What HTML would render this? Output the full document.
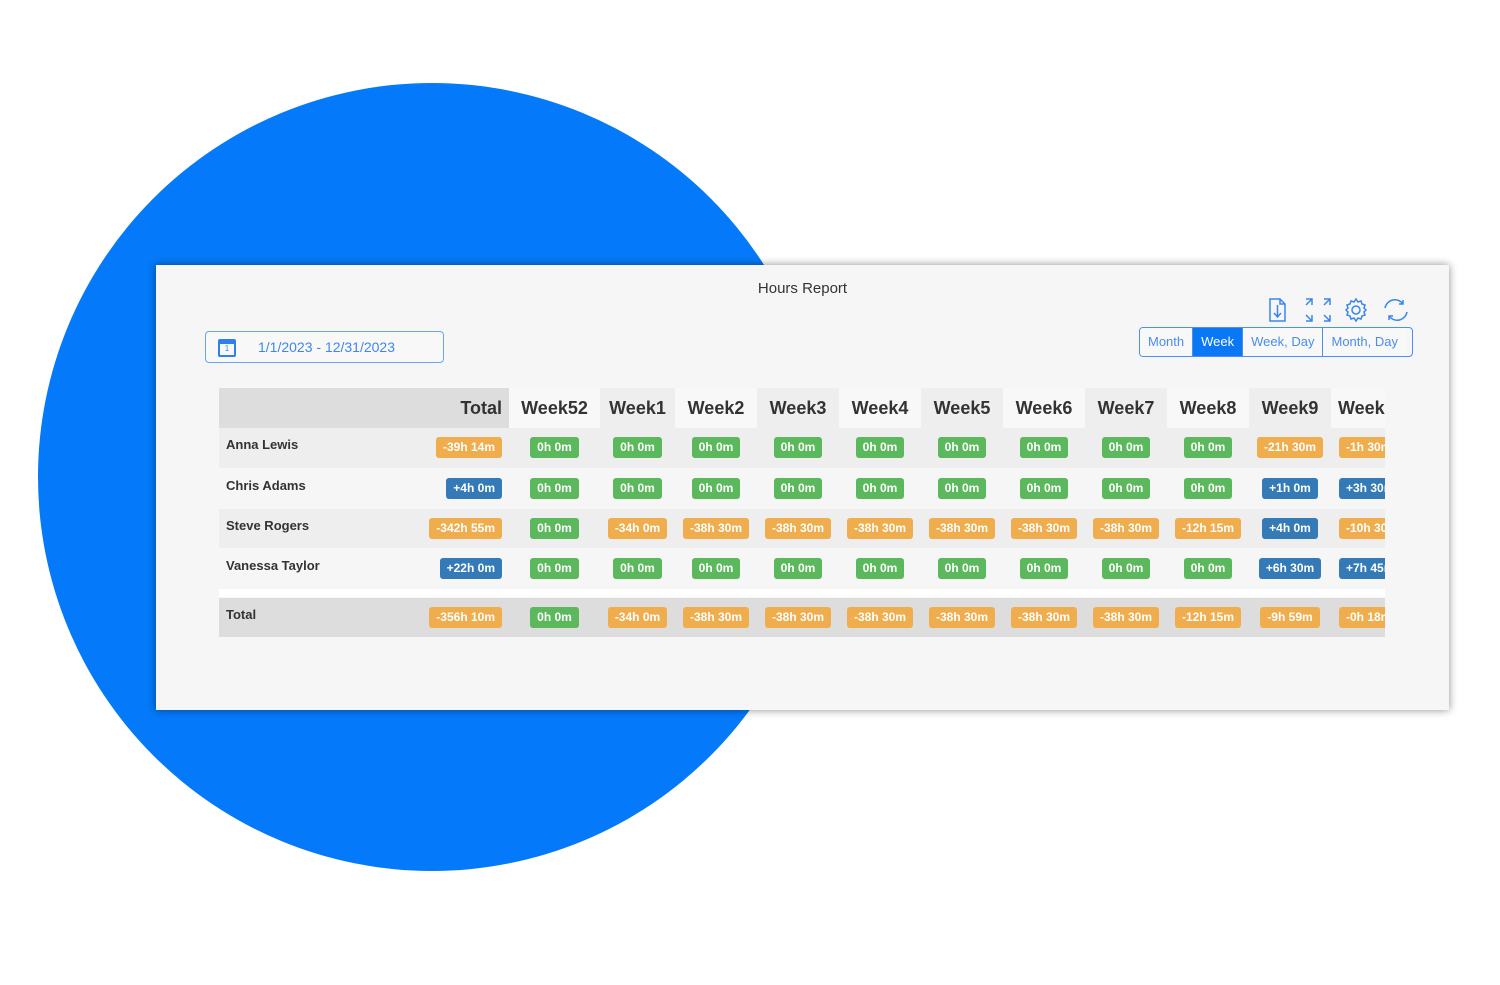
<!DOCTYPE html>
<html><head><meta charset="utf-8"><style>
*{margin:0;padding:0;box-sizing:border-box}
body{width:1500px;height:985px;background:#fff;position:relative;overflow:hidden;font-family:"Liberation Sans",sans-serif}
.circle{position:absolute;left:38px;top:83px;width:788px;height:788px;border-radius:50%;background:#0479f9}
.panel{position:absolute;left:156px;top:265px;width:1293px;height:445px;background:#f6f6f6;box-shadow:0 0 8px rgba(0,0,0,.45)}
.title{position:absolute;left:0;width:100%;top:15px;text-align:center;font-size:15px;color:#333}
.date{position:absolute;left:49px;top:66px;width:239px;height:32px;border:1px solid #6aa5f5;border-radius:4px;background:#f8f8f8;color:#3f86f0;font-size:14px;line-height:30px;padding-left:52px}
.cal{position:absolute;left:12px;top:7px;width:18px;height:18px;border:2px solid #2f80ed;border-top-width:5px;border-radius:2px;font-size:8px;line-height:10px;text-align:center}
.seg{position:absolute;left:983px;top:62px;width:274px;height:30px;display:flex;border:1px solid #4a90f0;border-radius:4px;overflow:hidden}
.seg div{padding:0 8px;font-size:13px;line-height:28px;color:#4a8cf0;border-left:1px solid #4a90f0;background:#f8f8f8;white-space:nowrap}
.seg div:first-child{border-left:none}
.seg .on{background:#0a78f5;color:#fff}
.icons{position:absolute;left:1110px;top:30px}
table{position:absolute;left:63px;top:123px;border-collapse:collapse}
td,th{height:40px;padding:0;text-align:center}
th{font-size:18px;color:#333;font-weight:bold}
td{border-bottom:1px solid #f6f6f6}
td.n{background:#ddd;width:290px;text-align:left;vertical-align:top;padding:9px 7px;font-size:13px;font-weight:bold;color:#333;position:relative}
.b{display:inline-block;vertical-align:middle;height:21px;line-height:21px;padding:0 7px;border-radius:3px;color:#fff;font-size:12px;font-weight:bold;white-space:nowrap}
.g{background:#5cb85c}.o{background:#f0ad4e}.bl{background:#337ab7}
.n .b{position:absolute;right:7px;top:9px}
.c{display:inline-block;vertical-align:middle;width:46px;overflow:hidden;border-radius:3px 0 0 3px}
.c .b{border-radius:3px 0 0 3px}
tr.r1 td{background:#eee}tr.r2 td{background:#f6f6f6}
tr.t td{background:#ddd}
</style></head><body>
<div class="circle"></div>
<div class="panel">
<div class="title">Hours Report</div>
<div class="date"><div class="cal">1</div>1/1/2023 - 12/31/2023</div>
<svg class="icons" width="150" height="30" viewBox="0 0 150 30" fill="none" stroke="#3a86ee" stroke-width="1.5">
<path d="M4 4h10l5 5v17H4z M14 4v5h5 M11.5 10v12 M8 18l3.5 4 3.5-4"/>
<path d="M42 4h6v6 M48 4l-6 6 M42 26h6v-6 M48 26l-6-6 M60 4h6v6 M66 4l-6 6 M60 26h6v-6 M66 26l-6-6" transform="translate(-2 0)"/>
<circle cx="90" cy="15" r="4"/><path d="M90 4l2 3 3-1 1 3 3 1-1 3 2 2-2 2 1 3-3 1-1 3-3-1-2 3-2-3-3 1-1-3-3-1 1-3-2-2 2-2-1-3 3-1 1-3 3 1z"/>
<path d="M119 13a10 10 0 0 1 18-4 M137 5v4h-4 M141 17a10 10 0 0 1-18 4 M123 25v-4h4"/>
</svg>
<div class="seg"><div>Month</div><div class="on">Week</div><div>Week, Day</div><div>Month, Day</div></div>
<table>
<tr><th style="background:#ddd;text-align:right;padding-right:7px">Total</th><th style="width:91px;background:#f8f8f8">Week52</th><th style="width:75px;background:#eee">Week1</th><th style="width:82px;background:#f8f8f8">Week2</th><th style="width:82px;background:#eee">Week3</th><th style="width:82px;background:#f8f8f8">Week4</th><th style="width:82px;background:#eee">Week5</th><th style="width:82px;background:#f8f8f8">Week6</th><th style="width:82px;background:#eee">Week7</th><th style="width:82px;background:#f8f8f8">Week8</th><th style="width:82px;background:#eee">Week9</th><th style="width:54px;background:#f8f8f8;text-align:left;padding-left:7px;overflow:hidden">Week</th></tr>
<tr class="r1"><td class="n">Anna Lewis<span class="b o">-39h 14m</span></td><td><span class="b g">0h 0m</span></td><td><span class="b g">0h 0m</span></td><td><span class="b g">0h 0m</span></td><td><span class="b g">0h 0m</span></td><td><span class="b g">0h 0m</span></td><td><span class="b g">0h 0m</span></td><td><span class="b g">0h 0m</span></td><td><span class="b g">0h 0m</span></td><td><span class="b g">0h 0m</span></td><td><span class="b o">-21h 30m</span></td><td style="text-align:left;padding-left:8px"><span class="c"><span class="b o">-1h 30m</span></span></td></tr>
<tr class="r2"><td class="n">Chris Adams<span class="b bl">+4h 0m</span></td><td><span class="b g">0h 0m</span></td><td><span class="b g">0h 0m</span></td><td><span class="b g">0h 0m</span></td><td><span class="b g">0h 0m</span></td><td><span class="b g">0h 0m</span></td><td><span class="b g">0h 0m</span></td><td><span class="b g">0h 0m</span></td><td><span class="b g">0h 0m</span></td><td><span class="b g">0h 0m</span></td><td><span class="b bl">+1h 0m</span></td><td style="text-align:left;padding-left:8px"><span class="c"><span class="b bl">+3h 30m</span></span></td></tr>
<tr class="r1"><td class="n">Steve Rogers<span class="b o">-342h 55m</span></td><td><span class="b g">0h 0m</span></td><td><span class="b o">-34h 0m</span></td><td><span class="b o">-38h 30m</span></td><td><span class="b o">-38h 30m</span></td><td><span class="b o">-38h 30m</span></td><td><span class="b o">-38h 30m</span></td><td><span class="b o">-38h 30m</span></td><td><span class="b o">-38h 30m</span></td><td><span class="b o">-12h 15m</span></td><td><span class="b bl">+4h 0m</span></td><td style="text-align:left;padding-left:8px"><span class="c"><span class="b o">-10h 30m</span></span></td></tr>
<tr class="r2"><td class="n">Vanessa Taylor<span class="b bl">+22h 0m</span></td><td><span class="b g">0h 0m</span></td><td><span class="b g">0h 0m</span></td><td><span class="b g">0h 0m</span></td><td><span class="b g">0h 0m</span></td><td><span class="b g">0h 0m</span></td><td><span class="b g">0h 0m</span></td><td><span class="b g">0h 0m</span></td><td><span class="b g">0h 0m</span></td><td><span class="b g">0h 0m</span></td><td><span class="b bl">+6h 30m</span></td><td style="text-align:left;padding-left:8px"><span class="c"><span class="b bl">+7h 45m</span></span></td></tr>
<tr><td colspan="12" style="height:9px;background:#fff"></td></tr>
<tr class="t"><td class="n">Total<span class="b o">-356h 10m</span></td><td><span class="b g">0h 0m</span></td><td><span class="b o">-34h 0m</span></td><td><span class="b o">-38h 30m</span></td><td><span class="b o">-38h 30m</span></td><td><span class="b o">-38h 30m</span></td><td><span class="b o">-38h 30m</span></td><td><span class="b o">-38h 30m</span></td><td><span class="b o">-38h 30m</span></td><td><span class="b o">-12h 15m</span></td><td><span class="b o">-9h 59m</span></td><td style="text-align:left;padding-left:8px"><span class="c"><span class="b o">-0h 18m</span></span></td></tr>
</table>
</div>
</body></html>
